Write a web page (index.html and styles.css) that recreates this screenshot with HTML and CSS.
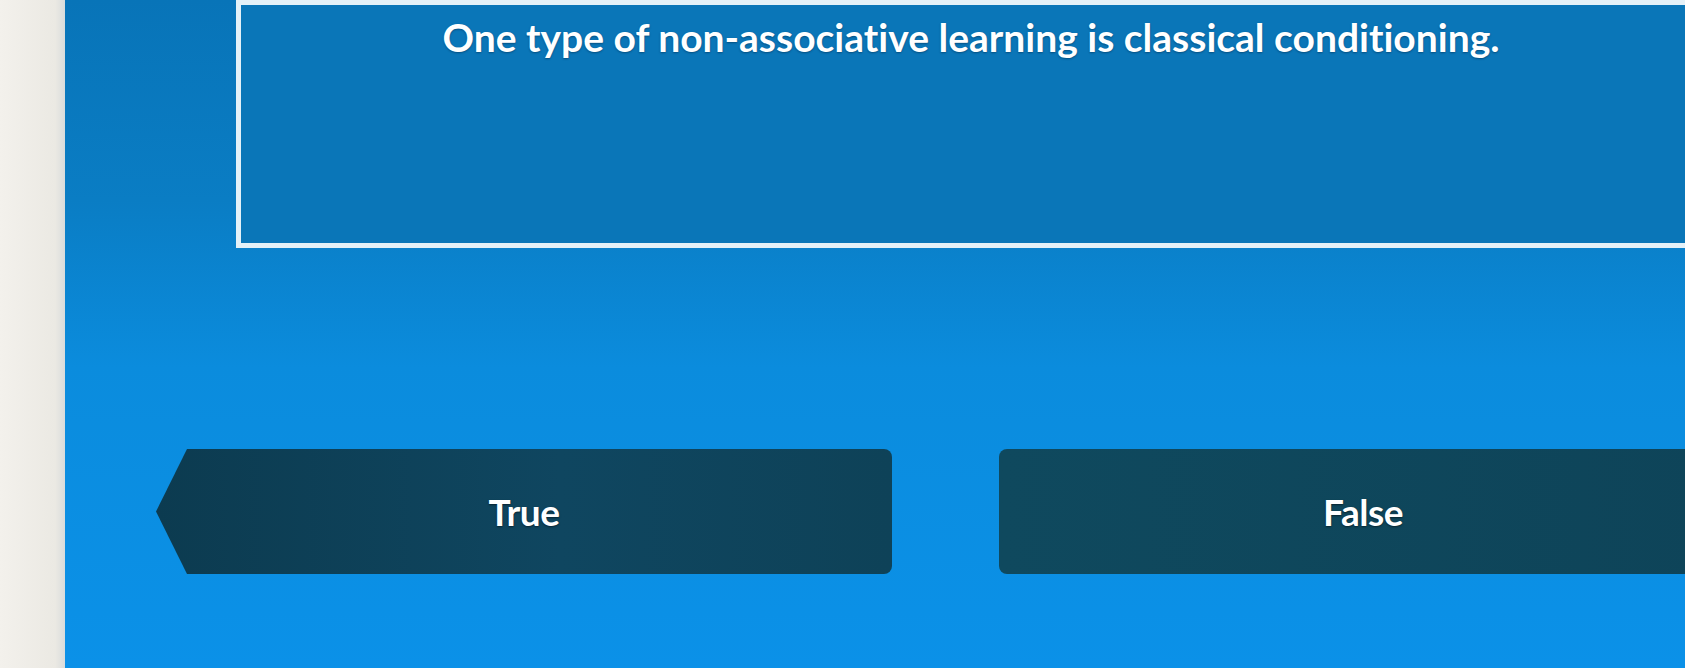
FILE: index.html
```html
<!DOCTYPE html>
<html lang="en">
<head>
    <meta charset="UTF-8">
    <meta name="viewport" content="width=device-width, initial-scale=1.0">
    <title>True or False</title>
    <link rel="stylesheet" href="styles.css">
</head>
<body>
    <div class="bezel"></div>

    <div class="stage">
        <div class="question">
            <p class="question-text">One type of non-associative learning is classical conditioning.</p>
        </div>

        <div class="answers">
            <button class="answer answer-true">True</button>
            <button class="answer answer-false">False</button>
        </div>
    </div>
</body>
</html>
```

FILE: styles.css
```css
* {
    box-sizing: border-box;
    margin: 0;
    padding: 0;
}

html, body {
    height: 100%;
    overflow: hidden;
}

body {
    display: flex;
    font-family: Lato, "Open Sans", sans-serif;
    font-variant-ligatures: none;
    background-color: #0b86d4;
}

.bezel {
    width: 65px;
    flex-shrink: 0;
    background: linear-gradient(to right, #f3f1ec, #ebe9e3 85%, #d9dcdc);
}

.stage {
    flex: 1;
    display: flex;
    flex-direction: column;
    background: linear-gradient(to bottom, #0874b8 0%, #0a7dc4 30%, #0b8cdd 55%, #0b91e8 100%);
}

/* 题目框，右边越出屏幕 */
.question {
    margin-left: 171px;
    margin-right: -16px;
    height: 248px;
    border: 5px solid #e4f1f8;
    border-right: none;
    background-color: #0a76b8;
    text-align: center;
    padding-top: 9px;
}

.question-text {
    color: #ffffff;
    font-size: 39px;
    font-weight: 700;
    line-height: 1.2;
    text-shadow: 0 1px 2px rgba(0, 30, 60, 0.45);
}

.answers {
    display: flex;
    gap: 107px;
    margin-top: 201px;
    margin-left: 91px;
    margin-right: -60px;
}

.answer {
    height: 125px;
    border: none;
    border-radius: 8px;
    color: #ffffff;
    font-family: inherit;
    font-variant-ligatures: none;
    font-size: 37px;
    font-weight: 700;
    letter-spacing: -0.5px;
    text-shadow: 0 1px 2px rgba(0, 0, 0, 0.5);
    cursor: pointer;
}

.answer-true {
    width: 736px;
    background: linear-gradient(to right, #0c3b50, #0f4660 55%, #0e4258);
    clip-path: polygon(31px 0, 100% 0, 100% 100%, 31px 100%, 0 50%);
}

.answer-false {
    width: 728px;
    background: linear-gradient(to right, #0f495e, #0e4459);
}
```
